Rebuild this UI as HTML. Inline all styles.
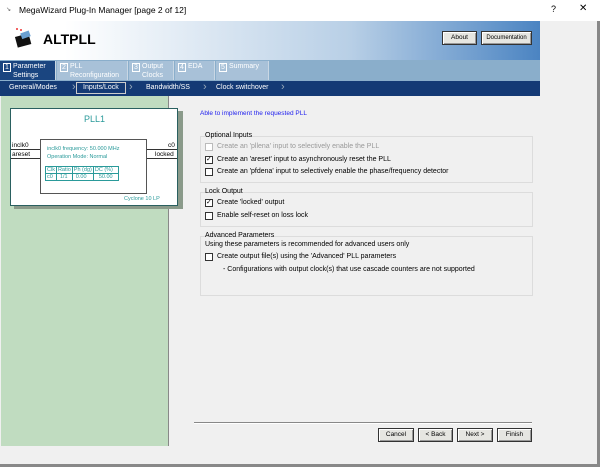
<!DOCTYPE html>
<html><head><style>
*{margin:0;padding:0;box-sizing:border-box}
body{width:600px;height:467px;background:#f0f0f0;font-family:"Liberation Sans",Tahoma,sans-serif;font-size:7px;color:#000;position:relative;overflow:hidden}
.a{position:absolute}
.btn{position:absolute;background:#e6e6e1;border:1px solid #333;box-shadow:inset 1px 1px 0 #fff,inset -1px -1px 0 #999;font-size:6.5px;text-align:center;line-height:12px;white-space:nowrap;overflow:hidden}
.tab{position:absolute;top:61px;height:19px;background:#a8c1d8;border-right:1px solid #c9d7e4;color:#fff;font-size:7px;line-height:8px;padding:2px 0 0 3px}
.num{display:inline-block;border:1px solid #fff;width:8px;height:9px;text-align:center;line-height:8px;margin-right:2px;vertical-align:top}
.sub{position:absolute;top:84px;color:#fff;font-size:7px}
.cb{position:absolute;width:8px;height:8px;border:1px solid #333;background:#fff}
.lbl{position:absolute;font-size:7px}
.grp{position:absolute;border:1px solid #dcdcdc;left:200px;width:333px}
</style></head><body>
<div class="a" style="left:0;top:0;width:600px;height:21px;background:#fff"></div>
<div class="a" style="left:6px;top:6px;font-size:6px;color:#666">↘</div>
<div class="a" style="left:19px;top:5px;font-size:8.5px">MegaWizard Plug-In Manager [page 2 of 12]</div>
<div class="a" style="left:551px;top:4px;font-size:9px">?</div>
<div class="a" style="left:579px;top:3px;font-size:10px">✕</div>
<div class="a" style="left:597px;top:21px;width:3px;height:446px;background:#888"></div>
<div class="a" style="left:0;top:464px;width:600px;height:3px;background:#888"></div>
<div class="a" style="left:0;top:21px;width:540px;height:39px;background:linear-gradient(90deg,#fff 0%,#fff 12%,#b8cfe6 65%,#4b84c2 100%)"></div>
<div class="a" style="left:14px;top:27px;width:20px;height:20px"><svg width="22" height="22"><rect x="2" y="8" width="14" height="11" fill="#111" transform="rotate(-15 9 13)"/><rect x="7" y="5" width="9" height="6" fill="#6a9fd0" transform="rotate(-20 11 8)"/><circle cx="3" cy="2" r="1" fill="#e33"/><circle cx="7" cy="3" r="1" fill="#e33"/></svg></div>
<div class="a" style="left:43px;top:31px;font-size:14px;font-weight:bold">ALTPLL</div>
<div class="btn" style="left:442px;top:31px;width:35px;height:14px">About</div>
<div class="btn" style="left:481px;top:31px;width:51px;height:14px;font-size:6px">Documentation</div>
<div class="a" style="left:0;top:60px;width:540px;height:21px;background:#8aaecb"></div>
<div class="tab" style="left:0;width:56px;background:#1a4580">
<span class="num">1</span>Parameter<br><span style="margin-left:10px">Settings</span></div>
<div class="tab" style="left:57px;width:71px"><span class="num">2</span>PLL<br><span style="margin-left:10px">Reconfiguration</span></div>
<div class="tab" style="left:129px;width:45px"><span class="num">3</span>Output<br><span style="margin-left:10px">Clocks</span></div>
<div class="tab" style="left:175px;width:40px"><span class="num">4</span>EDA</div>
<div class="tab" style="left:216px;width:53px"><span class="num">5</span>Summary</div>
<div class="a" style="left:0;top:81px;width:540px;height:15px;background:#143a75"></div>
<div class="sub" style="left:9px">General/Modes</div>
<div class="a" style="left:76px;top:82px;width:50px;height:12px;border:1px solid #ccc"></div>
<div class="sub" style="left:83px">Inputs/Lock</div>
<div class="sub" style="left:146px">Bandwidth/SS</div>
<div class="sub" style="left:216px">Clock switchover</div>
<div class="sub" style="left:72px;top:81px;font-size:11px;color:#9ab">›</div>
<div class="sub" style="left:129px;top:81px;font-size:11px;color:#9ab">›</div>
<div class="sub" style="left:203px;top:81px;font-size:11px;color:#9ab">›</div>
<div class="sub" style="left:281px;top:81px;font-size:11px;color:#9ab">›</div>
<div class="a" style="left:1px;top:96px;width:168px;height:350px;background:#c0dcc0;border-right:1px solid #888"></div>
<div class="a" style="left:14px;top:111px;width:169px;height:98px;background:#8a9a8a"></div>
<div class="a" style="left:10px;top:108px;width:168px;height:98px;background:#fff;border:1px solid #2a6060"></div>
<div class="a" style="left:84px;top:114px;font-size:9px;color:#2a9a9a">PLL1</div>
<div class="a" style="left:40px;top:139px;width:107px;height:55px;border:1px solid #555"></div>
<div class="a" style="left:11px;top:149px;width:29px;height:1px;background:#333"></div>
<div class="a" style="left:11px;top:158px;width:29px;height:1px;background:#333"></div>
<div class="a" style="left:147px;top:149px;width:30px;height:1px;background:#333"></div>
<div class="a" style="left:147px;top:158px;width:30px;height:1px;background:#333"></div>
<div class="a" style="left:12px;top:142px;font-size:6.5px">inclk0</div>
<div class="a" style="left:12px;top:151px;font-size:6.5px">areset</div>
<div class="a" style="left:168px;top:142px;font-size:6.5px">c0</div>
<div class="a" style="left:155px;top:151px;font-size:6.5px">locked</div>
<div class="a" style="left:47px;top:146px;font-size:5.5px;color:#2a9a9a">inclk0 frequency: 50.000 MHz</div>
<div class="a" style="left:47px;top:154px;font-size:5.5px;color:#2a9a9a">Operation Mode: Normal</div>
<table class="a" style="left:45px;top:166px;border-collapse:collapse;font-size:5.5px;color:#2a9a9a">
<tr><td style="border:1px solid #2a9a9a;padding:0 1px">Clk</td><td style="border:1px solid #2a9a9a;padding:0 1px">Ratio</td><td style="border:1px solid #2a9a9a;padding:0 1px">Ph (dg)</td><td style="border:1px solid #2a9a9a;padding:0 1px">DC (%)</td></tr>
<tr><td style="border:1px solid #2a9a9a;padding:0 1px">c0</td><td style="border:1px solid #2a9a9a;padding:0 3px">1/1</td><td style="border:1px solid #2a9a9a;padding:0 3px">0.00</td><td style="border:1px solid #2a9a9a;padding:0 5px">50.00</td></tr></table>
<div class="a" style="left:124px;top:196px;font-size:5.5px;color:#2a9a9a">Cyclone 10 LP</div>
<div class="a" style="left:200px;top:110px;font-size:6.5px;color:#2222ee">Able to implement the requested PLL</div>
<div class="grp" style="top:136px;height:47px"></div>
<div class="lbl" style="left:205px;top:132px">Optional Inputs</div>
<div class="cb" style="left:205px;top:143px;border-color:#bbb"></div><div class="lbl" style="left:217px;top:143px;color:#999">Create an 'pllena' input to selectively enable the PLL</div>
<div class="cb" style="left:205px;top:156px;font-size:7px;line-height:6px">✓</div><div class="lbl" style="left:217px;top:156px">Create an 'areset' input to asynchronously reset the PLL</div>
<div class="cb" style="left:205px;top:168px"></div><div class="lbl" style="left:217px;top:168px">Create an 'pfdena' input to selectively enable the phase/frequency detector</div>
<div class="grp" style="top:192px;height:35px"></div>
<div class="lbl" style="left:205px;top:188px">Lock Output</div>
<div class="cb" style="left:205px;top:199px;line-height:6px">✓</div><div class="lbl" style="left:217px;top:199px">Create 'locked' output</div>
<div class="cb" style="left:205px;top:212px"></div><div class="lbl" style="left:217px;top:212px">Enable self-reset on loss lock</div>
<div class="grp" style="top:236px;height:60px"></div>
<div class="lbl" style="left:205px;top:232px">Advanced Parameters</div>
<div class="lbl" style="left:205px;top:241px">Using these parameters is recommended for advanced users only</div>
<div class="cb" style="left:205px;top:253px"></div><div class="lbl" style="left:217px;top:253px">Create output file(s) using the 'Advanced' PLL parameters</div>
<div class="lbl" style="left:223px;top:266px">- Configurations with output clock(s) that use cascade counters are not supported</div>
<div class="a" style="left:194px;top:422px;width:338px;height:2px;border-top:1px solid #888;border-bottom:1px solid #fff"></div>
<div class="btn" style="left:378px;top:428px;width:36px;height:14px">Cancel</div>
<div class="btn" style="left:418px;top:428px;width:35px;height:14px">&lt; Back</div>
<div class="btn" style="left:457px;top:428px;width:36px;height:14px">Next &gt;</div>
<div class="btn" style="left:497px;top:428px;width:35px;height:14px">Finish</div>
</body></html>
